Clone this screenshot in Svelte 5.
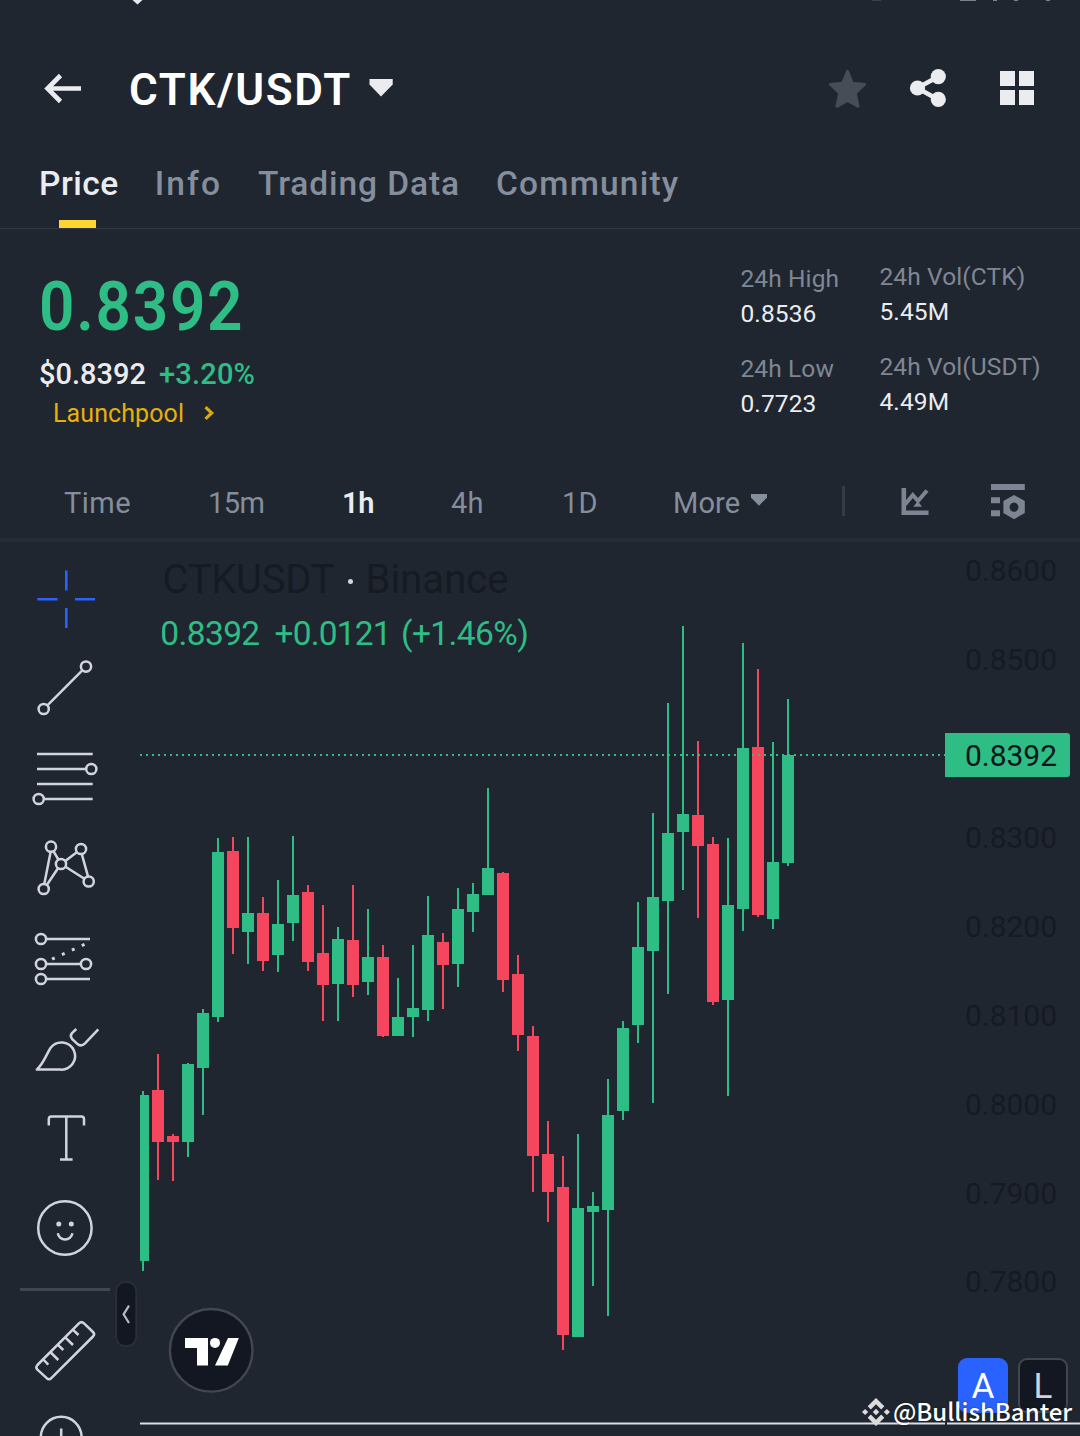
<script>
  const tabs = ['Price', 'Info', 'Trading Data', 'Community'];
  const frames = ['Time', '15m', '1h', '4h', '1D'];

  const stats = [
    [['24h High', '0.8536'], ['24h Low', '0.7723']],
    [['24h Vol(CTK)', '5.45M'], ['24h Vol(USDT)', '4.49M']]
  ];

  // direction, wick top, wick bottom, body top, body bottom
  const candles = [
    ['up', 1091, 1271, 1095, 1261], ['down', 1054, 1180, 1090, 1142], ['down', 1134, 1181, 1136, 1142],
    ['up', 1063, 1157, 1064, 1142], ['up', 1009, 1115, 1013, 1068], ['up', 838, 1022, 852, 1017],
    ['down', 837, 954, 851, 928], ['up', 837, 964, 913, 932], ['down', 897, 971, 913, 961],
    ['up', 880, 972, 924, 955], ['up', 836, 941, 895, 923], ['down', 885, 971, 892, 962],
    ['down', 905, 1021, 953, 985], ['up', 927, 1021, 939, 984], ['down', 885, 997, 940, 985],
    ['up', 909, 995, 957, 982], ['down', 945, 1037, 957, 1036], ['up', 978, 1036, 1017, 1036],
    ['up', 945, 1037, 1008, 1017], ['up', 896, 1021, 935, 1010], ['down', 933, 1009, 942, 965],
    ['up', 888, 987, 909, 964], ['up', 883, 932, 894, 912], ['up', 788, 895, 868, 895],
    ['down', 872, 992, 873, 980], ['down', 955, 1051, 974, 1035], ['down', 1026, 1192, 1036, 1156],
    ['down', 1121, 1222, 1154, 1192], ['down', 1156, 1350, 1187, 1335], ['up', 1134, 1337, 1208, 1337],
    ['up', 1192, 1286, 1206, 1212], ['up', 1079, 1316, 1115, 1210], ['up', 1021, 1120, 1028, 1111],
    ['up', 902, 1043, 947, 1025], ['up', 813, 1103, 897, 951], ['up', 703, 994, 833, 901],
    ['up', 626, 890, 814, 832], ['down', 741, 918, 815, 846], ['down', 837, 1005, 844, 1002],
    ['up', 838, 1096, 905, 1000], ['up', 643, 931, 748, 909], ['down', 669, 917, 747, 915],
    ['up', 742, 929, 862, 919], ['up', 699, 866, 755, 863]
  ];

  const axis = [
    ['0.8600', 581], ['0.8500', 670], ['0.8300', 848], ['0.8200', 937],
    ['0.8100', 1026], ['0.8000', 1115], ['0.7900', 1204], ['0.7800', 1292]
  ];

  // line work and node circles of every drawing tool
  const tools = [
    { name: 'cross', d: 'M66.3 570.5V590.5M66.3 608V628M37.3 599.2H57.5M75 599.2H95', nodes: [] },
    { name: 'trend', d: 'M47.4 705.3L82.3 670.3', nodes: [[43.7, 709], [86, 666.6]] },
    { name: 'levels', d: 'M37 754H92.7M37 769H86M37 784H92.7M44 799H92.7', nodes: [[91.3, 769], [38.7, 799]] },
    { name: 'pattern', d: 'M50.6 852L44.3 884M53.6 851.5L58.5 859.7M65.3 861L76.8 852.3M58 868.3L46.8 885M65.5 866.8L84.4 878.8M81.8 854.2L88 876.3', nodes: [[51, 846.7], [81, 849], [61, 864], [43.7, 889], [88.7, 881.5]] },
    { name: 'forecast', d: 'M46.3 939H90M46.3 964H80.7M46.3 979H90', dots: 'M52 959.2L86 943.8', nodes: [[41, 939], [41, 964], [86, 964], [41, 979]] },
    { name: 'brush', d: 'M36.8 1069.6C44 1063 46.5 1054 50.5 1048A13.6 13.6 0 1 1 60 1069.6ZM76.3 1029L72 1033.2Q69.6 1035.8 72 1038.8L77 1043.6Q81 1047.3 85 1043.4L98.3 1029.3', nodes: [] },
    { name: 'text', d: 'M48.8 1125.5V1119Q48.8 1116.4 51.4 1116.4H81.4Q84 1116.4 84 1119V1125.5M66.3 1116.4V1159.5M60 1159.4H72.6', nodes: [] },
    { name: 'emoji', d: 'M91.6 1228A26.7 26.7 0 1 1 38.2 1228A26.7 26.7 0 1 1 91.6 1228ZM57.8 1233.3A7.4 7.4 0 0 0 72.4 1233.3', nodes: [], eyes: true }
  ];
</script>

<div class="screen">
  <svg class="status" viewBox="0 0 1080 28">
    <path d="M132.5 0H142.5L137.5 4.5Z" fill="#e8eaed" />
    <path d="M960 0H976M993 0H997M1014 0H1018M1046 0H1050" stroke="#9a9fa8" stroke-width="1.4" />
    <path d="M872 0H881" stroke="#4a505b" stroke-width="1.4" />
  </svg>

  <header>
    <svg class="back" viewBox="44 70 40 36">
      <path d="M81 88.5H48M60.5 75.5L47.5 88.5L60.5 101.5" fill="none" stroke="#eaecef" stroke-width="4.6" />
    </svg>
    <h1>CTK/USDT</h1>
    <svg class="drop" viewBox="369 79 24 18"><path d="M369.5 79H392.7V84.5L381 96.5L369.5 84.5Z" fill="#eaecef" /></svg>
    <svg class="star" viewBox="828 68 40 42">
      <path d="M847.5 71L852.4 83L864.8 84.2L855.5 93L858.2 106.5L847.5 100.5L836.8 106.5L839.5 93L830.2 84.2L842.6 83Z" fill="#474d57" stroke="#474d57" stroke-width="2.6" stroke-linejoin="round" />
    </svg>
    <svg class="share" viewBox="909 68 38 40">
      <path d="M938.4 76.5L917.4 88L938.4 99.7" fill="none" stroke="#eaecef" stroke-width="4.6" />
      <g fill="#eaecef"><circle cx="917.5" cy="88" r="7.6" /><circle cx="938.3" cy="76.6" r="7.6" /><circle cx="938.3" cy="99.4" r="7.6" /></g>
    </svg>
    <svg class="grid" viewBox="1000 71 34 34"><path d="M1000 71h15v15h-15zM1019 71h15v15h-15zM1000 90h15v15h-15zM1019 90h15v15h-15z" fill="#eaecef" /></svg>
  </header>

  <nav>
    {#each tabs as tab, i}
      <span class="tab tab{i}" class:active={i === 0}>{tab}</span>
    {/each}
  </nav>

  <section class="ticker">
    <div class="quote">
      <div class="last"><span>0.8392</span></div>
      <div class="fiat"><span>$0.8392</span><span class="gain">+3.20%</span></div>
      <div class="pool">
        <span>Launchpool</span>
        <svg viewBox="204 405 11 16"><path d="M205.5 407.2L211.7 413L205.5 418.8" fill="none" stroke="#d9a70e" stroke-width="3.2" /></svg>
      </div>
    </div>
    {#each stats as column, c}
      <dl class="stats col{c}">
        {#each column as [label, value]}
          <div><dt>{label}</dt><dd>{value}</dd></div>
        {/each}
      </dl>
    {/each}
  </section>

  <section class="frames">
    {#each frames as frame}
      <span class:current={frame === '1h'}>{frame}</span>
    {/each}
    <span class="more">More<svg viewBox="750 493 18 13"><path d="M751 494H767V497.5L759 505.7L751 497.5Z" fill="#848e9c" /></svg></span>
    <i></i>
    <svg class="indicator" viewBox="901 486 28 29">
      <path d="M903.8 487V511.8H928.5" fill="none" stroke="#7c8591" stroke-width="4.6" />
      <path d="M905 503.5L912.8 494L918 500L927 489.5" fill="none" stroke="#7c8591" stroke-width="4" />
      <path d="M913.3 505.8H922L917.8 500Z" fill="#7c8591" />
    </svg>
    <svg class="settings" viewBox="990 483 36 37">
      <path d="M991 484h33.8v6H991zM991 497.2h9v6H991zM991 510.3h9v6H991z" fill="#7c8591" />
      <path fill-rule="evenodd" d="M1014 495L1024.8 501V513L1014 519.2L1003.4 513V501ZM1014 502.6a4.4 4.6 0 1 0 .01 0Z" fill="#7c8591" />
    </svg>
  </section>

  <main>
    <aside>
      {#each tools as tool, i}
        <svg class={tool.name} viewBox="20 {554 + 90 * i} 90 90">
          <path d={tool.d} />
          {#if tool.dots}<path d={tool.dots} class="dots" />{/if}
          {#each tool.nodes as [x, y]}<circle cx={x} cy={y} r="5.1" />{/each}
          {#if tool.eyes}<g class="eyes"><circle cx="58.8" cy="1224.1" r="2.5" /><circle cx="71.3" cy="1224.1" r="2.5" /></g>{/if}
        </svg>
      {/each}
      <hr />
      <svg viewBox="20 1306 90 90">
        <path d="M79.2 1323.2Q81.5 1321 83.8 1323.2L93 1332Q95.2 1334.2 93 1336.5L51.3 1378.2Q49 1380.5 46.7 1378.2L37.4 1369.6Q35.2 1367.4 37.4 1365Z" />
        <path d="M43.3 1359.5L48.3 1364.7M50.3 1352L58.3 1360M57.7 1344.7L63.3 1350M65 1337.2L73 1345M72.8 1329.6L78.5 1335" />
      </svg>
      <svg viewBox="20 1396 90 90">
        <circle cx="61.2" cy="1437.2" r="20.4" />
        <path d="M61.2 1428.5V1446M52.5 1437.2H70" />
      </svg>
    </aside>

    <div class="chart">
      <svg class="plot" viewBox="140 542 940 894">
        <g class="legend">
          <text x="162.5" y="592.7" font-size="40" textLength="172" class="ink">CTKUSDT</text>
          <circle cx="350.5" cy="581.6" r="2.5" fill="#d1d4dc" />
          <text x="365.5" y="592.7" font-size="40" textLength="143" class="ink">Binance</text>
          <g class="up" font-size="33.5">
            <text x="160.2" y="645" textLength="100">0.8392</text>
            <text x="274.5" y="645" textLength="117">+0.0121</text>
            <text x="401" y="645" textLength="128">(+1.46%)</text>
          </g>
        </g>

        {#each candles as [dir, high, low, top, bottom], i}
          <g class={dir}>
            <rect x={142 + 15 * i} y={high} width="2" height={low - high} />
            <rect x={i ? 137 + 15 * i : 140} y={top} width={i ? 12 : 9} height={bottom - top} />
          </g>
        {/each}

        <path d="M140 755H945" stroke="#2ebd85" stroke-width="2" stroke-dasharray="2 4" />

        {#each axis as [label, y]}
          <text x="965" {y} font-size="30" textLength="92" class="ink">{label}</text>
        {/each}
        <path d="M945 733H1067Q1070 733 1070 736V774Q1070 777 1067 777H945Z" fill="#2ebd85" />
        <text x="965" y="766" font-size="30" textLength="92" fill="#10141c">0.8392</text>

        <circle cx="211.2" cy="1350.3" r="41.3" fill="#131722" stroke="#434651" stroke-width="2.4" />
        <path d="M185 1338H208V1365.6H197V1348H185ZM228 1338H238.8L227.8 1365.6H215Z" fill="#fff" />
        <circle cx="215" cy="1342.9" r="5" fill="#fff" />
        <path d="M140 1423.6H945M947 1423.6H1080" stroke="#dfdde6" stroke-width="2" />
      </svg>

      <svg class="handle" viewBox="115 1280 22 68">
        <rect x="116.2" y="1282" width="20" height="64" rx="9" fill="#131722" stroke="#2a2e39" stroke-width="1.8" />
        <path d="M129 1305.7L123.6 1314.3L129 1323" fill="none" stroke="#b7bac4" stroke-width="2.2" />
      </svg>

      <div class="modes"><b class="auto">A</b><b>L</b></div>

      <div class="credit">
        <svg viewBox="0 0 28 28">
          <g fill="#dcdcdc">
            <path d="M14 0L22.3 8.3L19.2 11.4L14 6.2L8.8 11.4L5.7 8.3ZM14 28L5.7 19.7L8.8 16.6L14 21.8L19.2 16.6L22.3 19.7Z" />
            <path d="M0 14l3.1-3.1L6.2 14l-3.1 3.1zM21.8 14l3.1-3.1L28 14l-3.1 3.1zM10.8 14l3.2-3.2 3.2 3.2-3.2 3.2z" />
          </g>
        </svg>
        <span>@BullishBanter</span>
      </div>
    </div>
  </main>
</div>

<style>
  :global(body) { background: #202630; }
  .screen {
    width: 1080px; height: 1436px; overflow: hidden; background: #202630;
    font-family: Roboto, "Liberation Sans", sans-serif; color: #eaecef;
  }
  svg { display: block; flex: none; }
  .status { width: 1080px; height: 28px; }

  header { display: flex; align-items: center; height: 120px; padding: 0 46px 0 44px; }
  .back { width: 40px; height: 36px; }
  h1 {
    margin: 0 0 0 45px; padding-top: 4px; width: 240px; box-sizing: border-box; white-space: nowrap;
    font-size: 44px; line-height: 60px; font-weight: 600; color: #fff; letter-spacing: 1.6px;
  }
  .drop { width: 24px; height: 18px; }
  .star { width: 40px; height: 42px; margin: 2px 0 0 auto; }
  .share { width: 38px; height: 40px; margin-left: 41px; }
  .grid { width: 34px; height: 34px; margin-left: 53px; }

  nav { display: flex; gap: 36px; height: 80px; padding-left: 39px; border-bottom: 1px solid #323843; }
  .tab { position: relative; font-size: 33.5px; line-height: 71px; font-weight: 500; color: #848e9c; white-space: nowrap; }
  .tab0 { letter-spacing: .5px; }
  .tab1 { letter-spacing: 2.1px; }
  .tab2 { letter-spacing: .9px; }
  .tab3 { letter-spacing: 1.2px; }
  .active { color: #eaecef; }
  .active::after {
    content: ""; position: absolute; left: 20px; bottom: 0; width: 37px; height: 8px;
    background: #fcd535;
  }

  .ticker { display: flex; height: 235px; }
  .quote { width: 740.5px; padding: 38px 0 0 39px; box-sizing: border-box; }
  .last { font-size: 69px; line-height: 80px; font-weight: 600; color: #2ebd85; }
  .last span { display: inline-block; transform: scaleX(.9); transform-origin: 0 50%; letter-spacing: 1.9px; }
  .fiat { display: flex; gap: 13px; font-size: 29px; line-height: 54px; font-weight: 500; }
  .gain { color: #2ebd85; letter-spacing: .2px; }
  .pool { display: flex; align-items: center; gap: 20px; padding-left: 14px; font-size: 25px; line-height: 26px; color: #e6b00c; letter-spacing: .1px; }
  .pool svg { width: 11px; height: 16px; margin-top: -2px; }
  .stats { margin: 0; padding-top: 31.5px; font-size: 24.5px; line-height: 35px; white-space: nowrap; letter-spacing: .1px; }
  .stats div { margin-bottom: 20px; }
  .col0 { width: 139px; }
  .col1 { padding-top: 29.5px; }
  dt { color: #7f8794; }
  dd { margin: 0; }

  .frames {
    display: grid; grid-template-columns: 144px 134px 109px 111px 111px 169px 59px 89px 36px;
    align-items: center; height: 74px; padding-left: 64px; border-bottom: 4px solid #262c36;
    font-size: 29px; line-height: 40px; color: #848e9c; letter-spacing: .1px;
  }
  .frames span { padding-top: 4px; }
  .frames span:first-child { letter-spacing: .5px; }
  .frames span:nth-child(2) { letter-spacing: -.6px; }
  .frames .current { color: #eaecef; font-weight: 600; letter-spacing: -.4px; }
  .more { display: flex; align-items: center; gap: 10px; }
  .more svg { width: 18px; height: 13px; margin-top: -7px; }
  .frames i { width: 3px; height: 30px; background: #363c47; }
  .indicator { width: 28px; height: 29px; }
  .settings { width: 36px; height: 37px; }

  main { display: flex; height: 894px; }
  aside { width: 140px; height: 894px; padding: 12px 0 0 20px; box-sizing: border-box; overflow: hidden; }
  aside svg { width: 90px; height: 90px; fill: none; stroke: #d1d4dc; stroke-width: 2.5; stroke-linejoin: round; }
  aside .cross { stroke: #2962ff; stroke-width: 2.6; }
  .dots { stroke-width: 3; stroke-dasharray: 3 7.9; }
  .eyes { fill: #d1d4dc; stroke: none; }
  hr { width: 90px; height: 3px; margin: 14px 0 15px; border: 0; background: #434651; }

  .chart { position: relative; width: 940px; height: 894px; }
  .plot { width: 940px; height: 894px; }
  .ink { fill: #151a23; }
  .up { fill: #2ebd85; }
  .down { fill: #f6465d; }
  .handle { position: absolute; left: -25px; top: 738px; width: 22px; height: 68px; }
  .modes { position: absolute; right: 12px; top: 816px; display: flex; gap: 10px; }
  .modes b {
    width: 50px; height: 55px; box-sizing: border-box; border: 2px solid #434651; border-radius: 9px;
    background: #131722; color: #d1d4dc; font-size: 35px; line-height: 54px; font-weight: 400; text-align: center;
  }
  .modes .auto { background: #2962ff; border-color: #2962ff; color: #fff; }
  .credit {
    position: absolute; left: 722px; top: 852px; display: flex; align-items: center; gap: 3px; height: 36px;
    font: 500 24px/36px "Noto Sans CJK SC", "Noto Sans", sans-serif; color: #fff; text-shadow: 0 0 2px #0008;
  }
  .credit svg { width: 28px; height: 28px; }
  .credit span { margin-top: -2px; }
</style>
